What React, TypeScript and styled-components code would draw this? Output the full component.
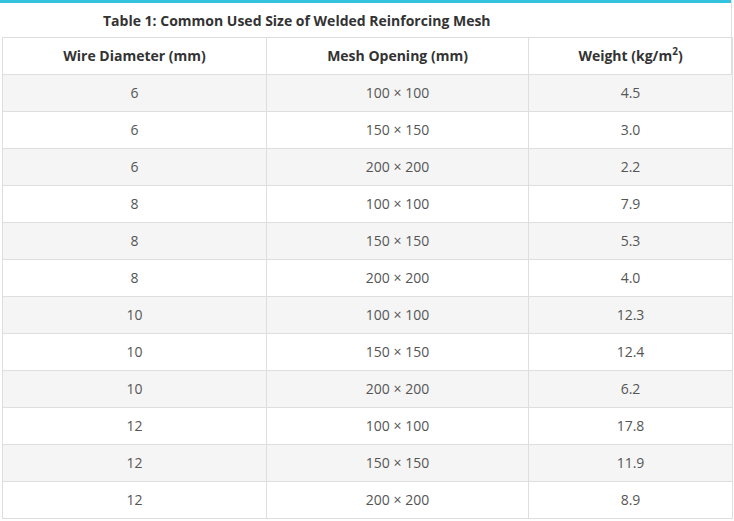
import styled, { createGlobalStyle } from "styled-components";

const GlobalStyle = createGlobalStyle`
  html, body {
    margin: 0;
    padding: 0;
    background: #fff;
  }
  body {
    font-family: "Open Sans", "Liberation Sans", sans-serif;
  }
`;

const Frame = styled.div`
  width: 731px;
  border-right: 1px solid #dedede;
  background: #fff;
`;

const Caption = styled.div`
  height: 34px;
  border-top: 3px solid #33c3df;
  display: flex;
  align-items: center;
  padding-left: 103px;
  font-size: 14px;
  font-weight: 700;
  color: #333;
`;

const Table = styled.table`
  margin-left: 2px;
  width: 730px;
  border-collapse: collapse;
  table-layout: fixed;
  font-size: 14px;
`;

const HeadCell = styled.th`
  height: 34px;
  padding: 0 0 2px;
  border: 1px solid #dedede;
  font-weight: 700;
  color: #333;
  text-align: center;

  sup {
    font-size: 10px;
    line-height: 0;
  }
`;

const Row = styled.tr<{ $shaded: boolean }>`
  background: ${({ $shaded }) => ($shaded ? "#f5f5f5" : "#fff")};
`;

const Cell = styled.td`
  height: 34px;
  padding: 0 0 2px;
  border: 1px solid #dedede;
  color: #555;
  text-align: center;
`;

const rows: [string, string, string][] = [
  ["6", "100 × 100", "4.5"],
  ["6", "150 × 150", "3.0"],
  ["6", "200 × 200", "2.2"],
  ["8", "100 × 100", "7.9"],
  ["8", "150 × 150", "5.3"],
  ["8", "200 × 200", "4.0"],
  ["10", "100 × 100", "12.3"],
  ["10", "150 × 150", "12.4"],
  ["10", "200 × 200", "6.2"],
  ["12", "100 × 100", "17.8"],
  ["12", "150 × 150", "11.9"],
  ["12", "200 × 200", "8.9"],
];

export default function App() {
  return (
    <>
      <GlobalStyle />
      <Frame>
        <Caption>Table 1: Common Used Size of Welded Reinforcing Mesh</Caption>
        <Table>
          <colgroup>
            <col style={{ width: 264 }} />
            <col style={{ width: 262 }} />
            <col style={{ width: 204 }} />
          </colgroup>
          <thead>
            <tr>
              <HeadCell>Wire Diameter (mm)</HeadCell>
              <HeadCell>Mesh Opening (mm)</HeadCell>
              <HeadCell>
                Weight (kg/m<sup>2</sup>)
              </HeadCell>
            </tr>
          </thead>
          <tbody>
            {rows.map(([d, o, w], i) => (
              <Row key={i} $shaded={i % 2 === 0}>
                <Cell>{d}</Cell>
                <Cell>{o}</Cell>
                <Cell>{w}</Cell>
              </Row>
            ))}
          </tbody>
        </Table>
      </Frame>
    </>
  );
}
